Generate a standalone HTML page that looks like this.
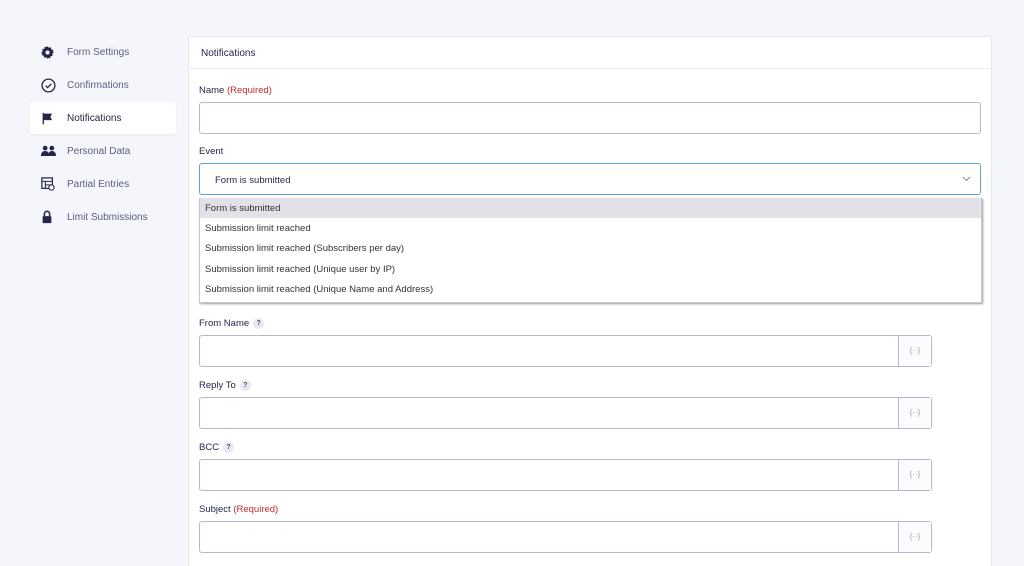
<!DOCTYPE html>
<html style="width:1024px;height:566px;overflow:hidden"><head><style>
*{box-sizing:border-box;margin:0;padding:0}
body{width:1024px;height:566px;overflow:hidden;background:#f4f6fb;font-family:"Liberation Sans",sans-serif;font-size:10px;color:#242748;position:relative}
.nav{position:absolute;left:30px;width:146px;height:32px;display:flex;align-items:center;color:#5b5e80;font-size:10px}
.nav.active{background:#fff;color:#242748;border-radius:3px;box-shadow:0 1px 2px rgba(0,0,0,.06)}
.nav svg{position:absolute;left:11px}
.nav span{position:absolute;left:37px;top:11px}
.panel{position:absolute;left:188px;top:36px;width:804px;height:530px;background:#fff;border:1px solid #e6e8f0;border-bottom:none;border-radius:3px 3px 0 0}
.hdr{position:absolute;left:0;top:0;right:0;height:32px;border-bottom:1px solid #eceef4;padding:11px 12px;font-size:10px}
.lbl{position:absolute;left:199px;font-size:9.5px;color:#242748}
.req{color:#c02b2b}
.q{display:inline-block;width:11px;height:11px;border-radius:50%;background:#e9e9f5;font-size:7px;text-align:center;line-height:11px;font-weight:bold;color:#555;margin-left:4px;vertical-align:1px}
.inp{position:absolute;left:199px;height:32px;border:1px solid #b8b8cc;border-radius:3px;background:#fff}
.mt{position:absolute;right:0;top:0;width:33px;height:100%;border-left:1px solid #b8b8cc;background:#fcfcfe;color:#a0a0b8;font-size:8px;text-align:center;line-height:30px}
.dd{position:absolute;left:199px;top:198px;width:783px;height:105px;background:#fff;border:1px solid #c8c8d4;border-top:none;box-shadow:1px 1px 2px #999}
.dd div{height:20.2px;line-height:21px;padding-left:5px;font-size:9.5px;color:#333}
</style></head><body>
<div class="nav" style="top:36px"><svg width="13" height="13" viewBox="0 0 16 16"><path fill="#242748" d="M8 0l1.5 2.2 2.6-.6.5 2.6 2.6.5-.6 2.6L16 8l-2.2 1.5.6 2.6-2.6.5-.5 2.6-2.6-.6L8 16l-1.5-2.2-2.6.6-.5-2.6-2.6-.5.6-2.6L0 8l2.2-1.5-.6-2.6 2.6-.5.5-2.6 2.6.6z"/><circle cx="8" cy="8" r="2.5" fill="#f4f6fb"/></svg><span>Form Settings</span></div>
<div class="nav" style="top:69px"><svg width="15" height="15" viewBox="0 0 16 16"><circle cx="8" cy="8" r="6.8" fill="none" stroke="#242748" stroke-width="1.4"/><path d="M5 8.2l2 2 4-4" fill="none" stroke="#242748" stroke-width="1.4"/></svg><span>Confirmations</span></div>
<div class="nav active" style="top:102px"><svg width="13" height="13" viewBox="0 0 16 16"><path fill="#242748" d="M2 1h1.6v14H2zM3.6 2h10l-2 4 2 4h-10z"/></svg><span>Notifications</span></div>
<div class="nav" style="top:135px"><svg width="15" height="12" viewBox="0 0 18 14"><circle cx="5" cy="3.5" r="2.8" fill="#242748"/><circle cx="13" cy="3.5" r="2.8" fill="#242748"/><path fill="#242748" d="M0 13c0-4 2-6 5-6s5 2 5 6zM9 13c0-4 1-6 4-6s5 2 5 6z"/></svg><span>Personal Data</span></div>
<div class="nav" style="top:168px"><svg width="14" height="14" viewBox="0 0 16 16"><rect x="1" y="1" width="12" height="12" fill="none" stroke="#242748" stroke-width="1.4"/><path d="M1 5h12M5 5v8M5 9h8" stroke="#242748" stroke-width="1.2"/><circle cx="12" cy="12" r="3" fill="#fff" stroke="#242748" stroke-width="1.2"/></svg><span>Partial Entries</span></div>
<div class="nav" style="top:201px"><svg width="12" height="14" viewBox="0 0 12 16"><path d="M3 7V4.5a3 3 0 016 0V7" fill="none" stroke="#242748" stroke-width="1.8"/><rect x="1" y="7" width="10" height="8" rx="1" fill="#242748"/></svg><span>Limit Submissions</span></div>
<div class="panel"><div class="hdr">Notifications</div></div>
<div class="lbl" style="top:85px">Name <span class="req">(Required)</span></div>
<div class="inp" style="top:102px;width:782px"></div>
<div class="lbl" style="top:146px">Event</div>
<div class="inp" style="top:163px;width:782px;border-color:#5fa3d3;padding:11px 15px;font-size:9.5px">Form is submitted<svg style="position:absolute;right:9px;top:12px" width="9" height="6" viewBox="0 0 9 6"><path d="M1 1l3.5 3.5L8 1" fill="none" stroke="#888" stroke-width="1"/></svg></div>
<div class="dd"><div style="background:#e2e1e7">Form is submitted</div><div>Submission limit reached</div><div>Submission limit reached (Subscribers per day)</div><div>Submission limit reached (Unique user by IP)</div><div>Submission limit reached (Unique Name and Address)</div></div>
<div class="lbl" style="top:318px">From Name<span class="q">?</span></div>
<div class="inp" style="top:335px;width:733px"><div class="mt">{··}</div></div>
<div class="lbl" style="top:380px">Reply To<span class="q">?</span></div>
<div class="inp" style="top:397px;width:733px"><div class="mt">{··}</div></div>
<div class="lbl" style="top:442px">BCC<span class="q">?</span></div>
<div class="inp" style="top:459px;width:733px"><div class="mt">{··}</div></div>
<div class="lbl" style="top:504px">Subject <span class="req">(Required)</span></div>
<div class="inp" style="top:521px;width:733px"><div class="mt">{··}</div></div>
</body></html>
